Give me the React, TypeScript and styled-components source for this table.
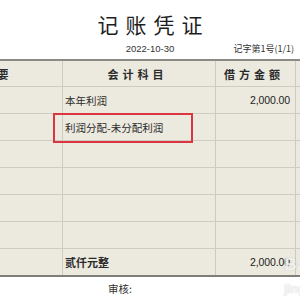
import React from "react";
import styled, { createGlobalStyle } from "styled-components";

const Global = createGlobalStyle`
  html, body { margin: 0; padding: 0; background: #ffffff; }
  body { font-family: "Noto Sans CJK SC", "Liberation Sans", sans-serif; }
`;

const Page = styled.div`
  position: relative;
  width: 300px;
  height: 300px;
  overflow: hidden;
  background: #ffffff;
  color: #222;
`;

const Title = styled.div`
  padding-top: 11px;
  height: 26px;
  line-height: 26px;
  text-align: center;
  font-size: 21px;
  letter-spacing: 7px;
  padding-left: 7px;
  color: #1e1e1e;
`;

const InfoRow = styled.div`
  display: grid;
  grid-template-columns: 1fr auto 1fr;
  align-items: center;
  height: 22px;
  font-size: 9.5px;
  color: #333;
`;

const DateText = styled.span`
  grid-column: 2;
  font-family: "Liberation Sans", "Noto Sans CJK SC", sans-serif;
`;

const VoucherNo = styled.span`
  grid-column: 3;
  justify-self: end;
  padding-right: 6px;
  font-size: 9px;
`;

const Sheet = styled.div`
  margin-left: -64px;
  width: 460px;
  background: #ece9df;
  border-top: 2px solid #8a8a86;
  border-bottom: 2px solid #7e7e7a;
`;

const Row = styled.div<{ $h: number }>`
  display: grid;
  grid-template-columns: 127px 153px 80px 100px;
  height: ${(p) => p.$h}px;
  border-bottom: 1px solid #cfccc4;
  &:last-child { border-bottom: none; }
`;

const Cell = styled.div<{ $align?: "left" | "center" | "right"; $bold?: boolean; $spaced?: boolean }>`
  display: flex;
  align-items: center;
  justify-content: ${(p) => (p.$align === "center" ? "center" : p.$align === "right" ? "flex-end" : "flex-start")};
  border-right: 1px solid #cdcac2;
  padding: 0 5px 0 2px;
  font-size: ${(p) => (p.$bold ? "11px" : "10.5px")};
  font-weight: ${(p) => (p.$bold ? 700 : 400)};
  letter-spacing: ${(p) => (p.$spaced ? "4px" : "0")};
  color: #2a2a2a;
  white-space: nowrap;
  overflow: hidden;
`;

const Amount = styled.span`
  font-family: "Liberation Sans", sans-serif;
  font-size: 10.5px;
  letter-spacing: -0.1px;
  color: #222;
`;

const Footer = styled.div`
  display: flex;
  padding: 4px 0 0 108px;
  font-size: 10.5px;
  color: #333;
`;

const Highlight = styled.div`
  position: absolute;
  left: 53px;
  top: 113px;
  box-sizing: border-box;
  width: 140px;
  height: 30px;
  border: 2px solid #dc3440;
`;

const Watermark = styled.div`
  position: absolute;
  right: -6px;
  bottom: 4px;
  display: flex;
  flex-direction: column;
  align-items: flex-start;
  font-family: "Liberation Sans", sans-serif;
  font-weight: 700;
  color: rgba(255, 255, 255, 0.8);
  text-shadow: 0 0 1px rgba(140, 140, 140, 0.5);
`;

const WmBig = styled.span`
  font-size: 17px;
  line-height: 18px;
`;

const WmSmall = styled.span`
  font-size: 12px;
  line-height: 14px;
  margin-top: 8px;
`;

type Line = { account: string; debit: string };

const lines: Line[] = [
  { account: "本年利润", debit: "2,000.00" },
  { account: "利润分配-未分配利润", debit: "" },
  { account: "", debit: "" },
  { account: "", debit: "" },
  { account: "", debit: "" },
  { account: "", debit: "" },
];

export default function App() {
  return (
    <Page>
      <Global />
      <Title>记账凭证</Title>
      <InfoRow>
        <DateText>2022-10-30</DateText>
        <VoucherNo>记字第1号(1/1)</VoucherNo>
      </InfoRow>
      <Sheet>
        <Row $h={25}>
          <Cell $align="center" $bold $spaced>摘要</Cell>
          <Cell $align="center" $bold $spaced>会计科目</Cell>
          <Cell $align="center" $bold $spaced>借方金额</Cell>
          <Cell $align="center" $bold $spaced>贷方金额</Cell>
        </Row>
        {lines.map((l, i) => (
          <Row $h={26} key={i}>
            <Cell />
            <Cell>{l.account}</Cell>
            <Cell $align="right">{l.debit && <Amount>{l.debit}</Amount>}</Cell>
            <Cell $align="right" />
          </Row>
        ))}
        <Row $h={26}>
          <Cell />
          <Cell $bold>贰仟元整</Cell>
          <Cell $align="right"><Amount>2,000.00</Amount></Cell>
          <Cell $align="right" />
        </Row>
      </Sheet>
      <Footer>审核:</Footer>
      <Highlight />
      <Watermark>
        <WmBig>Ba</WmBig>
        <WmSmall>jing</WmSmall>
      </Watermark>
    </Page>
  );
}
